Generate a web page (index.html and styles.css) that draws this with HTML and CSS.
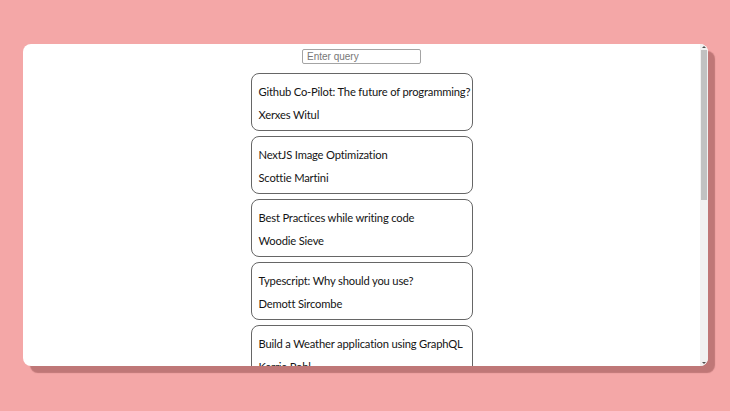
FILE: index.html
```html
<!DOCTYPE html>
<html lang="en">
<head>
<meta charset="utf-8">
<title>Posts</title>
<link rel="stylesheet" href="styles.css">
</head>
<body>
  <main class="window">
    <div class="content">
      <div class="search">
        <input class="query" type="text" placeholder="Enter query">
      </div>
      <ul class="posts">
        <li class="card"><p class="title">Github Co-Pilot: The future of programming?</p><p class="author">Xerxes Witul</p></li>
        <li class="card"><p class="title">NextJS Image Optimization</p><p class="author">Scottie Martini</p></li>
        <li class="card"><p class="title">Best Practices while writing code</p><p class="author">Woodie Sieve</p></li>
        <li class="card"><p class="title">Typescript: Why should you use?</p><p class="author">Demott Sircombe</p></li>
        <li class="card"><p class="title">Build a Weather application using GraphQL</p><p class="author">Kerrie Pohl</p></li>
      </ul>
    </div>
    <div class="scrollbar" aria-hidden="true">
      <span class="arrow up"></span>
      <div class="track"><div class="thumb"></div></div>
      <span class="arrow down"></span>
    </div>
  </main>
</body>
</html>
```
FILE: styles.css
```css
html, body {
  margin: 0;
  height: 100%;
}
body {
  background: #f4a7a7;
  padding: 44px 0 0 23px;
  box-sizing: border-box;
  font-family: Lato, "Liberation Sans", sans-serif;
}
.window {
  width: 685px;
  height: 322px;
  background: #fff;
  border-radius: 8px;
  box-shadow: 7px 7px 1px rgba(80, 20, 20, 0.32);
  overflow: hidden;
  display: flex;
}
.content {
  flex: 1;
  overflow: hidden;
}
.scrollbar {
  width: 8px;
  background: #f1f1f1;
  display: flex;
  flex-direction: column;
  align-items: center;
}
.arrow {
  height: 6px;
  width: 8px;
  display: flex;
  align-items: center;
  justify-content: center;
}
.arrow::before {
  content: "";
  width: 0;
  height: 0;
  border-left: 2px solid transparent;
  border-right: 2px solid transparent;
}
.arrow.up::before {
  border-bottom: 2px solid #505050;
}
.arrow.down::before {
  border-top: 2px solid #505050;
}
.track {
  flex: 1;
  width: 100%;
}
.thumb {
  height: 150px;
  margin: 0 1px;
  background: #c1c1c1;
}
.search {
  display: flex;
  justify-content: center;
  padding-top: 5px;
}
.query {
  width: 119px;
  height: 15px;
  box-sizing: border-box;
  margin: 0;
  padding: 0 4px;
  border: 1px solid #a4a4a4;
  border-radius: 2px;
  font-family: "Liberation Sans", Arial, sans-serif;
  font-size: 10px;
  color: #333;
}
.query::placeholder {
  color: #777;
}
.posts {
  list-style: none;
  margin: 9px 0 0 0;
  padding: 0 0 5px 0;
  display: flex;
  flex-direction: column;
  align-items: center;
  gap: 5px;
}
.card {
  width: 222px;
  height: 58px;
  flex: none;
  box-sizing: border-box;
  border: 1px solid #666;
  border-radius: 8px;
  padding: 0 6px 0 7px;
  color: #141414;
  font-size: 11.2px;
  letter-spacing: -0.17px;
  line-height: 14px;
  overflow: hidden;
}
.title {
  margin: 11px 0 9px 0;
  white-space: nowrap;
}
.author {
  margin: 0;
}
```
